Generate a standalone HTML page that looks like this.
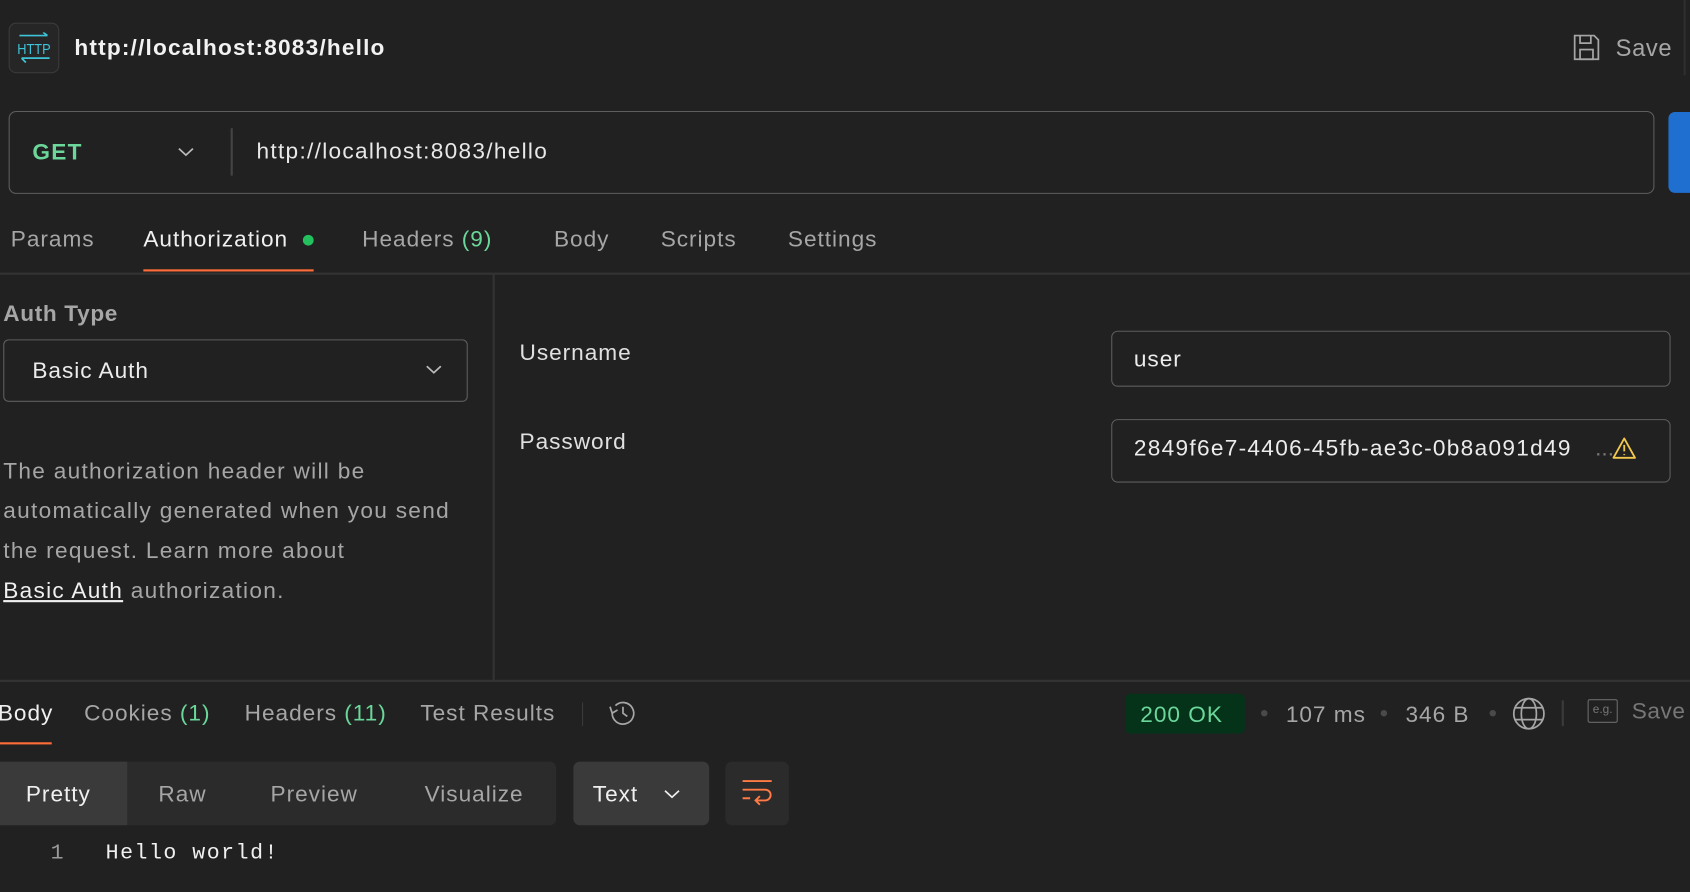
<!DOCTYPE html>
<html><head><meta charset="utf-8"><style>
html,body{margin:0;padding:0;background:#212121;width:1690px;height:892px;overflow:hidden}
#w{position:absolute;left:0;top:0;width:1568px;height:828px;transform:scale(1.0778,1.0773);transform-origin:0 0;font-family:"Liberation Sans",sans-serif;color:#a6a6a6;letter-spacing:0.9px}
.a{position:absolute;white-space:nowrap}
.t{font-size:21px;line-height:24px}
.g{color:#6bd79a}
.box{position:absolute;box-sizing:border-box}
</style></head><body><div id="w">
<div class="box" style="left:8px;top:21px;width:47px;height:47px;border:1px solid #3a3a3a;border-radius:7px;background:#262626"></div>
<svg class="a" style="left:14px;top:30px" width="36" height="30" viewBox="0 0 36 30"><path d="M4 3H30M26 0L30 3" stroke="#3ec4d8" stroke-width="1.6" fill="none"/><text x="2" y="20" font-family="Liberation Sans,sans-serif" font-size="14" textLength="31" lengthAdjust="spacingAndGlyphs" fill="#3ec4d8" letter-spacing="0">HTTP</text><path d="M6 24H32M6 24L10 28" stroke="#3ec4d8" stroke-width="1.6" fill="none"/></svg>
<div class="a" style="left:69px;top:33px;font-size:21px;font-weight:bold;color:#f2f2f2;letter-spacing:1.1px">http://localhost:8083/hello</div>
<svg class="a" style="left:1459px;top:31px" width="26" height="26" viewBox="0 0 26 26" fill="none" stroke="#a6a6a6" stroke-width="1.6"><path d="M2 2H20L24 6V24H2Z"/><path d="M7 2V9H17V2"/><rect x="7" y="15" width="12" height="9"/></svg>
<div class="a t" style="left:1499px;top:33px;font-size:22px;letter-spacing:0.6px">Save</div>
<div class="box" style="left:1562px;top:0;width:2px;height:70px;background:#2e2e2e"></div>
<div class="box" style="left:8px;top:103px;width:1527px;height:77px;border:1.5px solid #5e5e5e;border-radius:7px"></div>
<div class="a" style="left:30px;top:130px;font-size:21px;font-weight:bold;color:#6bd79a;letter-spacing:1.2px">GET</div>
<svg class="a" style="left:164px;top:135px" width="17" height="12"><path d="M2 3L8.5 9L15 3" stroke="#bbb" stroke-width="1.6" fill="none"/></svg>
<div class="box" style="left:214px;top:119px;width:1.5px;height:44px;background:#444"></div>
<div class="a" style="left:238px;top:129px;font-size:21px;color:#e8e8e8;letter-spacing:1.2px">http://localhost:8083/hello</div>
<div class="box" style="left:1548px;top:104px;width:24px;height:75px;background:#1f6fd1;border-radius:6px 0 0 6px"></div>
<div class="a t" style="left:10px;top:211px">Params</div>
<div class="a t" style="left:133px;top:211px;color:#f0f0f0">Authorization</div>
<div class="box" style="left:281px;top:218px;width:10px;height:10px;border-radius:50%;background:#22c15e"></div>
<div class="box" style="left:133px;top:250px;width:158px;height:2px;background:#ff6c37"></div>
<div class="a t" style="left:336px;top:211px">Headers <span class="g">(9)</span></div>
<div class="a t" style="left:514px;top:211px">Body</div>
<div class="a t" style="left:613px;top:211px">Scripts</div>
<div class="a t" style="left:731px;top:211px">Settings</div>
<div class="box" style="left:0;top:253px;width:1568px;height:1.5px;background:#333"></div>
<div class="box" style="left:457px;top:254px;width:1.5px;height:378px;background:#333"></div>
<div class="a" style="left:3px;top:280px;font-size:21px;font-weight:bold;color:#a6a6a6;letter-spacing:0.6px">Auth Type</div>
<div class="box" style="left:3px;top:315px;width:431px;height:58px;border:1.5px solid #5e5e5e;border-radius:5px"></div>
<div class="a t" style="left:30px;top:333px;color:#ececec">Basic Auth</div>
<svg class="a" style="left:394px;top:337px" width="17" height="12"><path d="M2 3L8.5 9L15 3" stroke="#bbb" stroke-width="1.6" fill="none"/></svg>
<div class="a" style="left:3px;top:419px;font-size:21px;line-height:37px;color:#a6a6a6;white-space:normal;width:455px;letter-spacing:1.2px">The authorization header will be<br>automatically generated when you send<br>the request. Learn more about<br><span style="color:#f0f0f0;text-decoration:underline">Basic Auth</span> authorization.</div>
<div class="a t" style="left:482px;top:316px;color:#e0e0e0">Username</div>
<div class="a t" style="left:482px;top:399px;color:#e0e0e0">Password</div>
<div class="box" style="left:1031px;top:307px;width:519px;height:52px;border:1.5px solid #5e5e5e;border-radius:6px"></div>
<div class="a t" style="left:1052px;top:322px;color:#ececec">user</div>
<div class="box" style="left:1031px;top:389px;width:519px;height:59px;border:1.5px solid #5e5e5e;border-radius:6px"></div>
<div class="a t" style="left:1052px;top:405px;color:#ececec;width:428px;overflow:hidden;letter-spacing:1.2px">2849f6e7-4406-45fb-ae3c-0b8a091d49</div>
<div class="a t" style="left:1480px;top:405px;color:#777;letter-spacing:0">...</div>
<svg class="a" style="left:1495px;top:404px" width="24" height="24" viewBox="0 0 24 24" fill="none" stroke="#f2c94c" stroke-width="1.7"><path d="M12 3L22 21H2Z" stroke-linejoin="round"/><path d="M12 9V15M12 17.5V18.5"/></svg>
<div class="box" style="left:0;top:631px;width:1568px;height:1.5px;background:#333"></div>
<div class="a t" style="left:-2px;top:651px;color:#f0f0f0">Body</div>
<div class="box" style="left:0;top:689px;width:48px;height:2px;background:#ff6c37"></div>
<div class="a t" style="left:78px;top:651px">Cookies <span class="g">(1)</span></div>
<div class="a t" style="left:227px;top:651px">Headers <span class="g">(11)</span></div>
<div class="a t" style="left:390px;top:651px">Test Results</div>
<div class="box" style="left:540px;top:652px;width:1px;height:22px;background:#3a3a3a"></div>
<svg class="a" style="left:563px;top:647px" width="30" height="30" viewBox="0 0 30 30" fill="none" stroke="#a6a6a6" stroke-width="1.6"><path d="M5 15A10 10 0 1 0 8 8"/><path d="M3 9L5 15L10 12"/><path d="M15 9V15L19 18"/></svg>
<div class="box" style="left:1044px;top:644px;width:111px;height:37px;background:#05331a;border-radius:5px"></div>
<div class="a t" style="left:1058px;top:652px;color:#6bd79a">200 OK</div>
<div class="box" style="left:1170px;top:659px;width:6px;height:6px;border-radius:50%;background:#4a4a4a"></div>
<div class="a t" style="left:1193px;top:652px">107 ms</div>
<div class="box" style="left:1281px;top:659px;width:6px;height:6px;border-radius:50%;background:#4a4a4a"></div>
<div class="a t" style="left:1304px;top:652px">346 B</div>
<div class="box" style="left:1382px;top:659px;width:6px;height:6px;border-radius:50%;background:#4a4a4a"></div>
<svg class="a" style="left:1403px;top:647px" width="31" height="31" viewBox="0 0 31 31" fill="none" stroke="#a6a6a6" stroke-width="1.6"><circle cx="15.5" cy="15.5" r="14"/><ellipse cx="15.5" cy="15.5" rx="7" ry="14"/><path d="M3 10H28M3 21H28"/></svg>
<div class="box" style="left:1449px;top:650px;width:1.5px;height:24px;background:#3a3a3a"></div>
<div class="box" style="left:1473px;top:649px;width:28px;height:22px;border:1.5px solid #6a6a6a;border-radius:2px;font-size:11px;color:#777;text-align:center;line-height:18px;letter-spacing:0">e.g.</div>
<div class="a t" style="left:1514px;top:649px;color:#777;letter-spacing:0.5px">Save</div>
<div class="box" style="left:0;top:707px;width:516px;height:59px;background:#2b2b2b;border-radius:0 6px 6px 0"></div>
<div class="box" style="left:0;top:707px;width:118px;height:59px;background:#3a3a3a"></div>
<div class="a t" style="left:24px;top:726px;color:#f0f0f0">Pretty</div>
<div class="a t" style="left:147px;top:726px">Raw</div>
<div class="a t" style="left:251px;top:726px">Preview</div>
<div class="a t" style="left:394px;top:726px">Visualize</div>
<div class="box" style="left:532px;top:707px;width:126px;height:59px;background:#3a3a3a;border-radius:6px"></div>
<div class="a t" style="left:550px;top:726px;color:#f0f0f0">Text</div>
<svg class="a" style="left:615px;top:731px" width="17" height="12"><path d="M2 3L8.5 9L15 3" stroke="#eee" stroke-width="1.6" fill="none"/></svg>
<div class="box" style="left:673px;top:707px;width:59px;height:59px;background:#2b2b2b;border-radius:6px"></div>
<svg class="a" style="left:688px;top:722px" width="30" height="30" viewBox="0 0 30 30" fill="none" stroke="#ff7a45" stroke-width="1.8"><path d="M1 3H28M1 11H22A5 5 0 0 1 22 21H14M17 17L13 21L17 25M1 19H8"/></svg>
<div class="a" style="left:47px;top:781px;font-family:'Liberation Mono',monospace;font-size:20px;color:#9a9a9a;letter-spacing:0">1</div>
<div class="a" style="left:98px;top:781px;font-family:'Liberation Mono',monospace;font-size:20px;color:#f0f0f0;letter-spacing:1.4px">Hello world!</div>
</div></body></html>
